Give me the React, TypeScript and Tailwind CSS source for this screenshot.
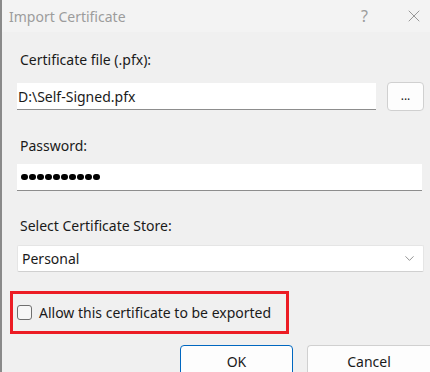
import { ChevronDown, X } from 'lucide-react';

const font = { fontFamily: '"Noto Sans", "Open Sans", sans-serif' };

export default function App() {
  return (
    <div
      className="w-[430px] h-[372px] overflow-hidden bg-[#f0f0f0] border-l-2 border-[#8a8a8a] text-[#1a1a1a]"
      style={font}
    >
      {/* title bar */}
      <div className="h-[32px] bg-[#f3f3f3] flex items-center pl-[7px] pr-[6px]">
        <span className="text-[14px] text-[#9c9c9c] flex-1">Import Certificate</span>
        <span className="text-[16px] text-[#9c9c9c] mr-[36px]">?</span>
        <X className="w-[20px] h-[20px] text-[#8f8f8f]" strokeWidth={1.1} />
      </div>

      <div className="pl-[15px] pr-[6px]">
        <div className="mt-[18px] h-[20px] pl-[3px] text-[14px] leading-[20px]">Certificate file (.pfx):</div>
        <div className="mt-[12px] flex items-center gap-[11px]">
          <div className="flex-1 h-[27px] bg-white border-b border-[#8d8d8d] flex items-center pl-[1px] text-[14px]">
            D:\Self-Signed.pfx
          </div>
          <div className="w-[37px] h-[29px] bg-[#fdfdfd] border border-[#d0d0d0] rounded-[4px] flex items-center justify-center text-[12px] leading-none pb-[2px]">
            ...
          </div>
        </div>

        <div className="mt-[25px] h-[20px] pl-[3px] text-[14px] leading-[20px]">Password:</div>
        <div className="mt-[8px] h-[27px] mr-[2px] bg-white border-b border-[#8d8d8d] flex items-center pl-[4px] gap-[1.5px]">
          {Array.from({ length: 10 }).map((_, i) => (
            <span key={i} className="w-[6.5px] h-[6.5px] rounded-full bg-black" />
          ))}
        </div>

        <div className="mt-[25px] h-[20px] pl-[3px] text-[14px] leading-[20px]">Select Certificate Store:</div>
        <div className="mt-[9px] h-[27px] bg-white border border-[#e5e5e5] border-b-[#d0d0d0] rounded-[2px] flex items-center pl-[4px] pr-[6px] text-[14px]">
          <span className="flex-1">Personal</span>
          <ChevronDown className="w-[15px] h-[15px] text-[#7a7a7a]" strokeWidth={1.3} />
        </div>
      </div>

      <div className="ml-[8px] mt-[19px] w-[279px] h-[43px] border-[3px] border-[#ec1c24] flex items-center pl-[4px] gap-[7px]">
        <span className="w-[15px] h-[15px] rounded-[3px] border border-[#6f6f6f] bg-[#f7f7f7]" />
        <span className="text-[14px]">Allow this certificate to be exported</span>
      </div>

      <div className="mt-[11px] flex justify-end gap-[14px]">
        <div className="w-[113px] h-[32px] rounded-[4px] bg-[#fdfdfd] border border-[#0067c0] flex items-center justify-center text-[14px]">
          OK
        </div>
        <div className="w-[123px] h-[32px] rounded-l-[4px] bg-[#fdfdfd] border border-r-0 border-[#d0d0d0] flex items-center justify-center text-[14px]">
          Cancel
        </div>
      </div>
    </div>
  );
}
